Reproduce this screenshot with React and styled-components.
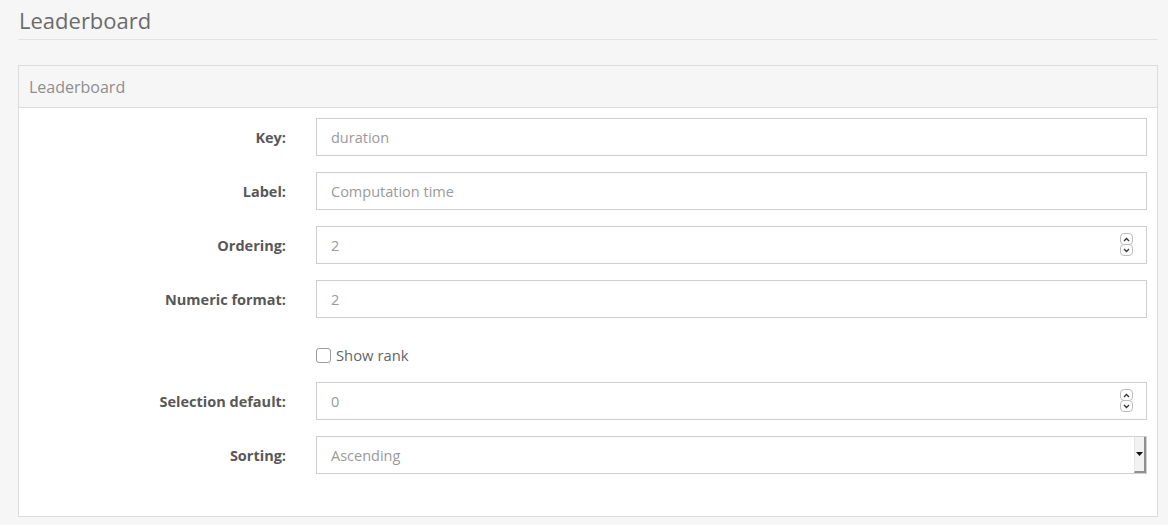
import React from "react";
import styled, { createGlobalStyle } from "styled-components";

const Global = createGlobalStyle`
  html, body { margin: 0; padding: 0; background: #f6f6f6; }
  body { font-family: "Open Sans", "Noto Sans", sans-serif; }
  * { box-sizing: border-box; }
`;

const Page = styled.div`
  padding: 0 10px 0 18px;
`;

const Title = styled.h1`
  margin: 0;
  padding: 6px 0 5px 1px;
  font-size: 22px;
  font-weight: 400;
  color: #6b6b6b;
  line-height: 28px;
  border-bottom: 1px solid #e3e3e3;
`;

const Panel = styled.section`
  margin-top: 25px;
  background: #fff;
  border: 1px solid #dcdcdc;
`;

const PanelHead = styled.div`
  height: 42px;
  padding: 0 10px;
  display: flex;
  align-items: center;
  background: #f6f6f6;
  border-bottom: 1px solid #dcdcdc;
  color: #8e8e8e;
  font-size: 16px;
`;

const PanelBody = styled.div`
  padding: 10px 10px 42px 0;
  display: flex;
  flex-direction: column;
  gap: 16px;
`;

const Row = styled.div`
  display: grid;
  grid-template-columns: 267px 1fr;
  column-gap: 30px;
  align-items: center;
  min-height: ${(p) => (p.$tall ? 32 : 38)}px;
  padding-top: ${(p) => (p.$tall ? 10 : 0)}px;
`;

const Label = styled.label`
  text-align: right;
  font-weight: 700;
  font-size: 14.5px;
  color: #585858;
`;

const Field = styled.div`
  position: relative;
  height: 38px;
  border: 1px solid #cfcfcf;
  background: #fff;
  display: flex;
  align-items: center;
  padding: 1px 0 0 14px;
  color: #9a9a9a;
  font-size: 14.5px;
`;

const Spinner = styled.div`
  position: absolute;
  right: 13px;
  top: 6px;
  display: flex;
  flex-direction: column;
`;

const SpinBtn = styled.div`
  width: 13px;
  height: 12px;
  border: 1px solid #bdbdbd;
  border-radius: 4px;
  display: flex;
  align-items: center;
  justify-content: center;
  background: #fff;
  margin-top: ${(p) => (p.$down ? -1 : 0)}px;
`;

const SelectArrow = styled.div`
  position: absolute;
  right: 0;
  top: 0;
  bottom: 0;
  width: 12px;
  background: #f2f2f2;
  border-left: 1px solid #e6e6e6;
  border-right: 2px solid #8f8f8f;
  border-bottom: 2px solid #8f8f8f;
  display: flex;
  align-items: center;
  justify-content: center;
`;

const Check = styled.span`
  width: 15px;
  height: 15px;
  border: 1px solid #9c9c9c;
  border-radius: 3px;
  background: #fff;
  flex: none;
`;

const CheckLine = styled.div`
  display: flex;
  align-items: center;
  gap: 5px;
  font-size: 14.8px;
  color: #666;
`;

const Chevron = ({ up }) => (
  <svg width="7" height="5" viewBox="0 0 7 5">
    <path
      d={up ? "M1 4 L3.5 1.5 L6 4" : "M1 1 L3.5 3.5 L6 1"}
      fill="none"
      stroke="#333"
      strokeWidth="1.3"
    />
  </svg>
);

const Number = ({ value }) => (
  <Field>
    {value}
    <Spinner>
      <SpinBtn>
        <Chevron up />
      </SpinBtn>
      <SpinBtn $down>
        <Chevron />
      </SpinBtn>
    </Spinner>
  </Field>
);

const rows = [
  { label: "Key:", value: "duration" },
  { label: "Label:", value: "Computation time" },
  { label: "Ordering:", value: "2", number: true },
  { label: "Numeric format:", value: "2" },
];

export default function App() {
  return (
    <Page>
      <Global />
      <Title>Leaderboard</Title>
      <Panel>
        <PanelHead>Leaderboard</PanelHead>
        <PanelBody>
          {rows.map((r) => (
            <Row key={r.label}>
              <Label>{r.label}</Label>
              {r.number ? <Number value={r.value} /> : <Field>{r.value}</Field>}
            </Row>
          ))}
          <Row $tall>
            <span />
            <CheckLine>
              <Check />
              Show rank
            </CheckLine>
          </Row>
          <Row>
            <Label>Selection default:</Label>
            <Number value="0" />
          </Row>
          <Row>
            <Label>Sorting:</Label>
            <Field>
              Ascending
              <SelectArrow>
                <svg width="7" height="4" viewBox="0 0 7 4">
                  <path d="M0 0 H7 L3.5 4 Z" fill="#111" />
                </svg>
              </SelectArrow>
            </Field>
          </Row>
        </PanelBody>
      </Panel>
    </Page>
  );
}
